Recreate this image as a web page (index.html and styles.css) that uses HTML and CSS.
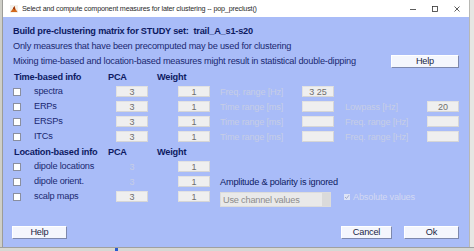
FILE: index.html
```html
<!DOCTYPE html>
<html>
<head>
<meta charset="utf-8">
<link rel="stylesheet" href="styles.css">
</head>
<body>
<div class="desk">
  <div class="win">
    <div class="titlebar">
      <svg class="appicon" width="8" height="8" viewBox="0 0 8 8">
        <rect x="0" y="0" width="8" height="8" fill="#f4f0ea"/>
        <path d="M0.5 7 L3 3.5 L4.5 1 L5.5 4 L7.5 7 Z" fill="#d2691e"/>
        <path d="M3 3.5 L4.5 1 L4.8 5 Z" fill="#8b2500"/>
      </svg>
      <span class="title">Select and compute component measures for later clustering -- pop_preclust()</span>
      <div class="controls">
        <svg width="8" height="8" viewBox="0 0 8 8"><path d="M1 4.5 H7" stroke="#333" stroke-width="0.8"/></svg>
        <svg width="8" height="8" viewBox="0 0 8 8"><rect x="1.5" y="1.5" width="5" height="5" fill="none" stroke="#333" stroke-width="0.8"/></svg>
        <svg width="8" height="8" viewBox="0 0 8 8"><path d="M1.5 1.5 L6.5 6.5 M6.5 1.5 L1.5 6.5" stroke="#333" stroke-width="0.8"/></svg>
      </div>
    </div>
    <div class="panel">
      <div class="line bold">Build pre-clustering matrix for STUDY set:&nbsp; trail_A_s1-s20</div>
      <div class="line">Only measures that have been precomputed may be used for clustering</div>
      <div class="line mix">
        <span>Mixing time-based and location-based measures might result in statistical double-dipping</span>
        <button class="btn btn-help-top">Help</button>
      </div>
      <div class="grid">
        <div class="span2 bold">Time-based info</div>
        <div class="bold">PCA</div>
        <div class="bold">Weight</div>
        <div class="rest"></div>

        <div class="cb"><span class="box-cb"></span></div>
        <div class="lbl">spectra</div>
        <div class="cpca"><span class="edit">3</span></div>
        <div class="cw"><span class="edit">1</span></div>
        <div class="dis">Freq. range [Hz]</div>
        <div><span class="edit">3 25</span></div>
        <div class="dis c7"></div>
        <div></div>

        <div class="cb"><span class="box-cb"></span></div>
        <div class="lbl">ERPs</div>
        <div class="cpca"><span class="edit">3</span></div>
        <div class="cw"><span class="edit">1</span></div>
        <div class="dis">Time range [ms]</div>
        <div><span class="edit"></span></div>
        <div class="dis c7">Lowpass [Hz]</div>
        <div><span class="edit">20</span></div>

        <div class="cb"><span class="box-cb"></span></div>
        <div class="lbl">ERSPs</div>
        <div class="cpca"><span class="edit">3</span></div>
        <div class="cw"><span class="edit">1</span></div>
        <div class="dis">Time range [ms]</div>
        <div><span class="edit"></span></div>
        <div class="dis c7">Freq. range [Hz]</div>
        <div><span class="edit"></span></div>

        <div class="cb"><span class="box-cb"></span></div>
        <div class="lbl">ITCs</div>
        <div class="cpca"><span class="edit">3</span></div>
        <div class="cw"><span class="edit">1</span></div>
        <div class="dis">Time range [ms]</div>
        <div><span class="edit"></span></div>
        <div class="dis c7">Freq. range [Hz]</div>
        <div><span class="edit"></span></div>

        <div class="span2 bold">Location-based info</div>
        <div class="bold">PCA</div>
        <div class="bold">Weight</div>
        <div class="rest"></div>

        <div class="cb"><span class="box-cb"></span></div>
        <div class="lbl">dipole locations</div>
        <div class="cpca"><span class="edit flat">3</span></div>
        <div class="cw"><span class="edit">1</span></div>
        <div class="rest"></div>

        <div class="cb"><span class="box-cb"></span></div>
        <div class="lbl">dipole orient.</div>
        <div class="cpca"><span class="edit flat">3</span></div>
        <div class="cw"><span class="edit">1</span></div>
        <div class="rest note">Amplitude &amp; polarity is ignored</div>

        <div class="cb"><span class="box-cb"></span></div>
        <div class="lbl">scalp maps</div>
        <div class="cpca"><span class="edit">3</span></div>
        <div class="cw"><span class="edit">1</span></div>
        <div class="span-pop"><span class="popup"><span class="poptext">Use channel values</span><span class="arrow"></span></span></div>
        <div class="span-abs"><span class="abs-cb"><svg width="6" height="6" viewBox="0 0 6 6"><path d="M1 3 L2.5 4.5 L5 1.2" fill="none" stroke="#9aa3c4" stroke-width="0.9"/></svg></span><span class="abs-lbl">Absolute values</span></div>
      </div>
      <div class="footer">
        <button class="btn btn-help">Help</button>
        <button class="btn btn-cancel">Cancel</button>
        <button class="btn btn-ok">Ok</button>
      </div>
    </div>
  </div>
  <div class="rstrip"></div>
</div>
<div class="taskbar"><span class="tmark"></span></div>
</body>
</html>
```

FILE: styles.css
```css
html, body {
  margin: 0;
  padding: 0;
}
body {
  width: 474px;
  height: 251px;
  overflow: hidden;
  background: #d6d6d2;
  font-family: "Liberation Sans", Arial, sans-serif;
  font-size: 9.2px;
  letter-spacing: -0.2px;
  color: #1a2870;
}
.desk {
  display: flex;
  height: 247px;
  padding-left: 3px;
  background: #cfcfc8;
}
.win {
  width: 466px;
  height: 247px;
  display: flex;
  flex-direction: column;
  box-shadow: -1px 0 0 #9c9c98;
}
.rstrip {
  flex: 1;
  background: #e6e6e3;
  border-left: 1px solid #b8b8b4;
}
.titlebar {
  height: 17px;
  background: #ffffff;
  display: flex;
  align-items: center;
  padding-left: 7px;
}
.appicon {
  margin-right: 4px;
}
.title {
  font-size: 7.2px;
  letter-spacing: -0.18px;
  color: #2a2a2a;
  white-space: nowrap;
}
.controls {
  margin-left: auto;
  display: flex;
  gap: 14px;
  padding-right: 8px;
  align-items: center;
}
.panel {
  flex: 1;
  background: #a9bcf8;
  padding: 7px 10px 0 10px;
  display: flex;
  flex-direction: column;
}
.line {
  height: 15px;
  line-height: 15px;
  white-space: nowrap;
}
.bold {
  font-weight: bold;
  color: #0d1a62;
}
.mix {
  display: flex;
  align-items: center;
}
.btn {
  font-family: inherit;
  font-size: 9.2px;
  letter-spacing: -0.2px;
  color: #1a1f44;
  background: #f4f6fd;
  border: 1px solid;
  border-color: #ffffff #7d88ad #7d88ad #ffffff;
  padding: 0;
  height: 13px;
  line-height: 11px;
}
.btn-help-top {
  margin-left: auto;
  width: 68px;
}
.grid {
  display: grid;
  grid-template-columns: 21px 74px 49px 63px 82px 32px 93px 32px;
  grid-auto-rows: 15px;
  align-items: center;
  white-space: nowrap;
}
.span2 {
  grid-column: span 2;
  padding-left: 1px;
}
.rest {
  grid-column: span 4;
}
.note {
  color: #0d1a62;
}
.cb {
  display: flex;
  align-items: center;
}
.box-cb {
  width: 6px;
  height: 6px;
  background: #ffffff;
  border: 1px solid #8a8fa0;
  margin-top: 1px;
}
.lbl {
  color: #1a2870;
  align-self: start;
  line-height: 14px;
}
.edit {
  display: block;
  box-sizing: border-box;
  width: 32px;
  height: 11px;
  background: #efefef;
  border: 1px solid #e2e2e2;
  border-right-color: #d6d6d6;
  border-bottom-color: #d6d6d6;
  color: #6e6e6e;
  text-align: center;
  line-height: 10px;
  font-size: 9px;
  letter-spacing: 0;
}
.edit.flat {
  background: transparent;
  border-color: transparent;
  color: #c6cde6;
}
.cpca .edit {
  margin-left: 8px;
}
.cw .edit {
  margin-left: 21px;
}
.dis {
  color: #c6cde6;
}
.c7 {
  padding-left: 11px;
}
.span-pop {
  grid-column: span 2;
  align-self: start;
  padding-top: 3px;
  height: 15px;
}
.popup {
  display: flex;
  box-sizing: border-box;
  width: 111px;
  height: 15px;
  background: #e9e9e9;
  border: 1px solid #dcdcdc;
  align-items: center;
}
.poptext {
  flex: 1;
  padding-left: 2px;
  color: #8c8c8c;
}
.arrow {
  width: 8px;
  height: 13px;
  background: #dadada;
}
.span-abs {
  grid-column: span 2;
  display: flex;
  align-items: center;
  padding-left: 10px;
  margin-top: 1px;
}
.abs-cb {
  display: flex;
  width: 6px;
  height: 6px;
  background: #dde3f6;
  margin-right: 3px;
}
.abs-lbl {
  color: #d2d8f2;
}
.footer {
  display: flex;
  align-items: center;
  margin-top: 22px;
}
.btn-help {
  width: 55px;
  margin-left: -1px;
}
.btn-cancel {
  width: 51px;
  margin-left: auto;
}
.btn-ok {
  width: 55px;
  margin-left: 12px;
}
.taskbar {
  height: 4px;
  background: #d8d8d4;
  border-top: 1px solid #a0a0a0;
  padding-left: 115px;
}
.tmark {
  display: block;
  width: 3px;
  height: 4px;
  background: #2a5ad0;
}
```
